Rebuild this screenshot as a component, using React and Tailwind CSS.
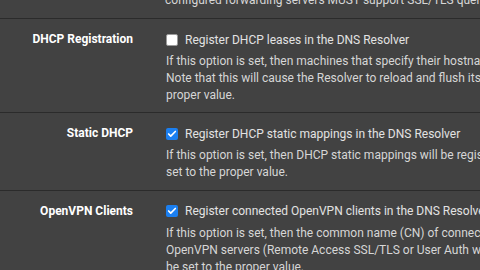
import { Check } from 'lucide-react'

const rows = [
  {
    label: 'DHCP Registration',
    checked: false,
    title: 'Register DHCP leases in the DNS Resolver',
    lines: [
      'If this option is set, then machines that specify their hostname when requesting a DHCP lease will be registered in the DNS Resolver so that their name can be resolved.',
      'Note that this will cause the Resolver to reload and flush its resolution cache whenever a DHCP lease is issued. The domain in System > General Setup should also be set to the',
      'proper value.',
    ],
  },
  {
    label: 'Static DHCP',
    checked: true,
    title: 'Register DHCP static mappings in the DNS Resolver',
    lines: [
      'If this option is set, then DHCP static mappings will be registered in the DNS Resolver, so that their name can be resolved. The domain in System > General Setup should also be',
      'set to the proper value.',
    ],
  },
  {
    label: 'OpenVPN Clients',
    checked: true,
    title: 'Register connected OpenVPN clients in the DNS Resolver',
    lines: [
      'If this option is set, then the common name (CN) of connected OpenVPN clients will be registered in the DNS Resolver, so that their name can be resolved. This only works for',
      'OpenVPN servers (Remote Access SSL/TLS or User Auth with Remote Access SSL/TLS) operating in "tun" mode. The domain in System > General Setup should also',
      'be set to the proper value.',
    ],
  },
]

function Box({ checked }) {
  return checked ? (
    <span className="h-[12px] w-[12px] rounded-[2px] bg-[#1b7ff0] flex items-center justify-center shrink-0">
      <Check className="h-[10px] w-[10px] text-white" strokeWidth={4} />
    </span>
  ) : (
    <span className="h-[12px] w-[12px] rounded-[2px] bg-white border border-[#9a9a9a] shrink-0" />
  )
}

function Row({ row }) {
  return (
    <div className="flex border-t border-[#2b2b2b] pt-[12px] pb-[9px]">
      <div className="w-[133px] shrink-0 text-right font-bold text-white leading-[17px]">{row.label}</div>
      <div className="ml-[33px] flex-1 min-w-0">
        <label className="flex items-center gap-[7px] h-[17px] text-[#e2e2e2]">
          <Box checked={row.checked} />
          <span className="whitespace-nowrap">{row.title}</span>
        </label>
        <div className="mt-[5px] text-[#d6d6d6] leading-[16.8px]">
          {row.lines.map((l, i) => (
            <div key={i} className="whitespace-nowrap">{l}</div>
          ))}
        </div>
      </div>
    </div>
  )
}

export default function App() {
  return (
    <div className="w-[480px] h-[270px] overflow-hidden bg-[#424242] text-[12px]" style={{ fontFamily: 'Roboto, "Noto Sans", sans-serif' }}>
      <div className="h-[18px] overflow-hidden flex flex-col justify-end pb-[9px]">
        <div className="pl-[165px] whitespace-nowrap text-[#d6d6d6] leading-[16.8px]">
          configured forwarding servers MUST support SSL/TLS queries on port 853.
        </div>
      </div>
      {rows.map((r) => (
        <Row key={r.label} row={r} />
      ))}
    </div>
  )
}
